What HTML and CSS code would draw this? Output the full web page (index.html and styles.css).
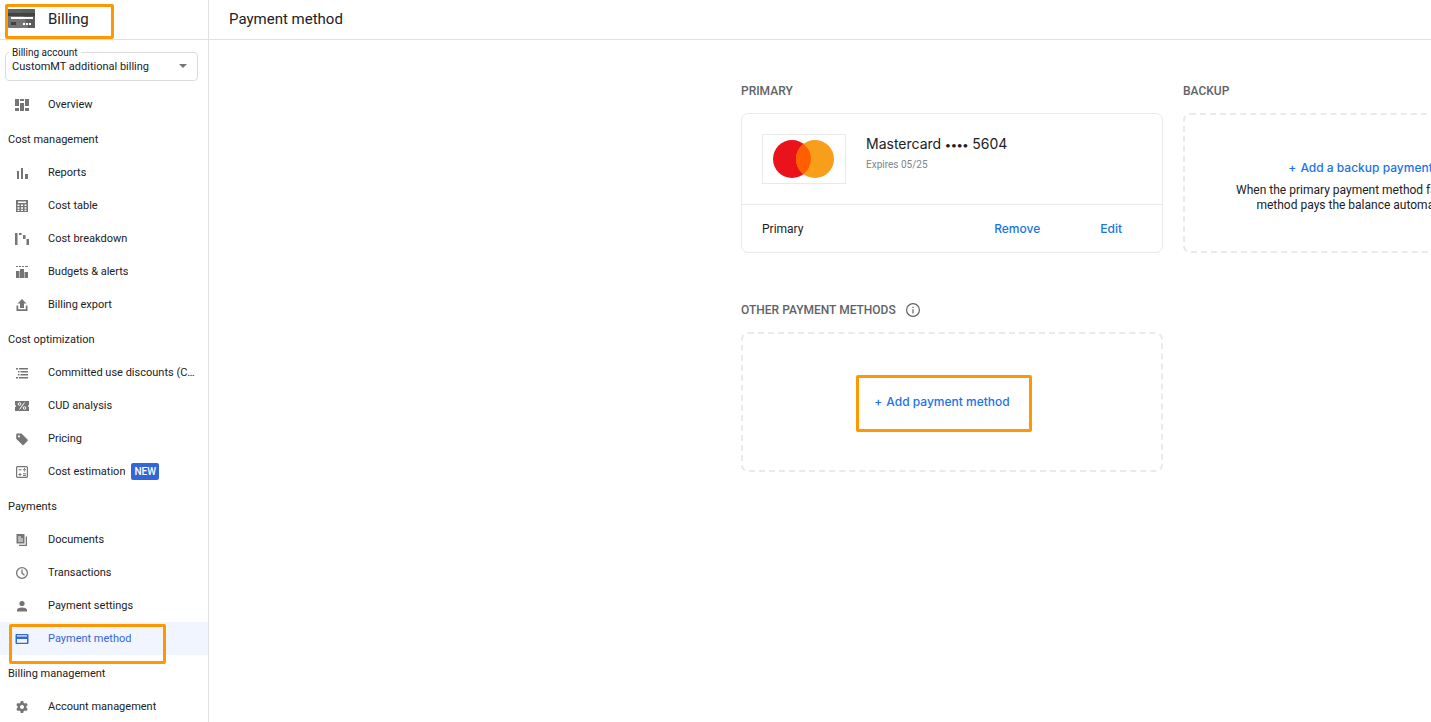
FILE: index.html
```html
<!DOCTYPE html>
<html lang="en">
<head>
    <meta charset="UTF-8">
    <meta name="viewport" content="width=device-width, initial-scale=1.0">
    <title>Payment method - Billing</title>
    <link rel="stylesheet" href="styles.css">
</head>
<body>
    <aside class="sidebar">
        <div class="product highlight highlight-product">
            <svg class="product-icon" width="28" height="20" viewBox="0 0 28 20">
                <rect x="0" y="0" width="27" height="19" rx="1" fill="#757575"/>
                <rect x="0" y="0" width="27" height="4" rx="1" fill="#616161"/>
                <path d="M14 0h12l1 1v18H20z" fill="#5c5c5c"/>
                <rect x="0" y="4" width="27" height="3" fill="#424242"/>
                <rect x="3" y="8" width="22" height="2" fill="#fff"/>
                <rect x="3" y="13" width="5" height="3" fill="#424242"/>
                <path d="M15 14h2v2h-2zM18 14h2v2h-2zM21 14h2v2h-2z" fill="#fff"/>
            </svg>
            <span class="product-name">Billing</span>
        </div>

        <div class="account">
            <label for="account">Billing account</label>
            <select id="account">
                <option>CustomMT additional billing</option>
            </select>
            <svg class="account-arrow" width="8" height="4" viewBox="0 0 8 4"><path d="M0 0h8L4 4z" fill="#757575"/></svg>
        </div>

        <nav class="nav">
            <a class="nav-item" href="#">
                <svg viewBox="0 0 16 16"><path d="M1 2h4v7H1zM1 11h4v3H1zM6 2h4v2H6zM6 6h4v8H6zM11 2h4v7h-4zM11 11h4v3h-4z"/></svg>
                <span>Overview</span>
            </a>

            <h2 class="nav-title">Cost management</h2>
            <a class="nav-item" href="#">
                <svg viewBox="0 0 16 16"><path d="M3 6h2v8H3zM7 3h2v11H7zM11 9h3v5h-3z"/></svg>
                <span>Reports</span>
            </a>
            <a class="nav-item" href="#">
                <svg viewBox="0 0 16 16"><path fill-rule="evenodd" d="M2 2h12v12H2zM4 3.500v1.500h8V3.500zM3.500 6.500v1.500h2V6.500zM7 6.500v1.500h2V6.500zM10.500 6.500v1.500h2V6.500zM3.500 9.200v1.500h2V9.200zM7 9.200v1.500h2V9.200zM10.500 9.200v1.500h2V9.200zM3.500 11.700v1.300h2v-1.300zM7 11.700v1.300h2v-1.300zM10.500 11.700v1.300h2v-1.300z"/></svg>
                <span>Cost table</span>
            </a>
            <a class="nav-item" href="#">
                <svg viewBox="0 0 16 16"><path d="M1 2h2.500v12H1zM5 2h2.500v2H5zM9 4h2.500v4H9zM12.500 8H15v6h-2.500z"/></svg>
                <span>Cost breakdown</span>
            </a>
            <a class="nav-item" href="#">
                <svg viewBox="0 0 16 16"><path d="M2 2h2v1H2zM5 2h2v1H5zM8 2h2v1H8zM11 2h3v1h-3zM2 7h3.500v7H2zM6 5h4v9H6zM10.500 8H14v6h-3.500z"/></svg>
                <span>Budgets &amp; alerts</span>
            </a>
            <a class="nav-item" href="#">
                <svg viewBox="0 0 16 16"><path d="M8 2l4.500 4.500H10v4.500H6V6.500H3.500zM2.500 8.500H4.200v3.800h7.600V8.500h1.700V14h-11z"/></svg>
                <span>Billing export</span>
            </a>

            <h2 class="nav-title">Cost optimization</h2>
            <a class="nav-item" href="#">
                <svg viewBox="0 0 16 16"><path d="M2 3h2v1.500H2zM5 3h9v1.500H5zM4 6h1.500v1.500H4zM6.500 6H14v1.500H6.500zM4 9h1.500v1.500H4zM6.500 9H14v1.500H6.500zM2 12h2v1.500H2zM5 12h9v1.500H5z"/></svg>
                <span>Committed use discounts (CUDs)</span>
            </a>
            <a class="nav-item" href="#">
                <svg viewBox="0 0 16 16"><path d="M1 3h14v4a1 1 0 0 0 0 2V13H1V9a1 1 0 0 0 0-2z"/><g fill="none" stroke="#fff"><path d="M10.500 4.500l-5 7"/><circle cx="5.500" cy="6" r="1.300"/><circle cx="10.500" cy="10" r="1.300"/></g></svg>
                <span>CUD analysis</span>
            </a>
            <a class="nav-item" href="#">
                <svg viewBox="0 0 16 16"><path fill-rule="evenodd" d="M3.200 2.500H7.500l6 6q.8.800 0 1.600l-3.700 3.700q-.8.800-1.600 0l-6-6V3.500q0-1 1-1zM5 4.200a1.100 1.100 0 1 0 .01 0z"/></svg>
                <span>Pricing</span>
            </a>
            <a class="nav-item" href="#">
                <svg viewBox="0 0 16 16"><rect x="2.600" y="2.600" width="10.800" height="10.800" rx="1" fill="none" stroke="#757575" stroke-width="1.200"/><path d="M4.500 5.200h3v1h-3zM9 5.200h3v1H9zM9 9.200h3v1H9zM9 11h3v1H9zM5.500 9h1v3h-1zM4.500 10h3v1h-3zM10 4h1v1h-1zM10 6.500h1v1h-1z"/></svg>
                <span>Cost estimation</span>
                <span class="badge">NEW</span>
            </a>

            <h2 class="nav-title">Payments</h2>
            <a class="nav-item" href="#">
                <svg viewBox="0 0 16 16"><path fill-rule="evenodd" d="M2.500 2h8v9.500h-8zM4 4.500v1h3v-1zM4 6.500v1h5v-1zM4 8.500v1h5v-1zM11.700 4.500H13V14H5v-1.300h6.700z"/></svg>
                <span>Documents</span>
            </a>
            <a class="nav-item" href="#">
                <svg viewBox="0 0 16 16"><g fill="none" stroke="#757575" stroke-width="1.300"><circle cx="8" cy="8" r="5.400"/><path d="M8 4.500V8.200l2.500 2"/></g></svg>
                <span>Transactions</span>
            </a>
            <a class="nav-item" href="#">
                <svg viewBox="0 0 16 16"><circle cx="8" cy="5.500" r="2.600"/><path d="M3 13.500v-1.500q0-2.600 5-2.600t5 2.600v1.500z"/></svg>
                <span>Payment settings</span>
            </a>
            <a class="nav-item active highlight highlight-nav" href="#" aria-current="page">
                <svg viewBox="0 0 16 16"><path fill-rule="evenodd" d="M2.500 3h11q1 0 1 1v8q0 1-1 1h-11q-1 0-1-1V4q0-1 1-1zM3 4.200v1.300h10V4.200zM3 8v3.800h10V8z"/></svg>
                <span>Payment method</span>
            </a>

            <h2 class="nav-title">Billing management</h2>
            <a class="nav-item" href="#">
                <svg viewBox="0 0 16 16"><path fill-rule="evenodd" d="M6.800 2h2.400l.4 1.700 1.200.7 1.700-.5 1.200 2.100-1.300 1.200v1.600l1.300 1.200-1.200 2.100-1.700-.5-1.200.7-.4 1.700H6.800l-.4-1.700-1.200-.7-1.700.5-1.200-2.100 1.300-1.200V7.200L2.300 6l1.200-2.100 1.700.5 1.200-.7zM8 6a2 2 0 1 0 .01 0z"/></svg>
                <span>Account management</span>
            </a>
        </nav>
    </aside>

    <main class="main">
        <header class="page-header">
            <h1>Payment method</h1>
        </header>

        <div class="methods">
            <section>
                <h2 class="methods-title">PRIMARY</h2>
                <div class="card">
                    <div class="card-info">
                        <svg class="card-logo" width="84" height="50" viewBox="0 0 84 50">
                            <rect x="0.500" y="0.500" width="83" height="49" fill="#fff" stroke="#e8eaed"/>
                            <circle cx="30" cy="25" r="19" fill="#eb131b"/>
                            <circle cx="53" cy="25" r="19" fill="#f79f1a"/>
                            <path d="M41.500 9.900a19 19 0 0 1 0 30.200a19 19 0 0 1 0-30.200z" fill="#ff5f00"/>
                        </svg>
                        <div>
                            <div class="card-name">Mastercard <span class="dots">••••</span> 5604</div>
                            <div class="card-expiry">Expires 05/25</div>
                        </div>
                    </div>
                    <div class="card-actions">
                        <span class="card-role">Primary</span>
                        <button class="link-button">Remove</button>
                        <button class="link-button">Edit</button>
                    </div>
                </div>
            </section>

            <section>
                <h2 class="methods-title">BACKUP</h2>
                <div class="card card-empty">
                    <button class="link-button add-button"><span>+</span>Add a backup payment method</button>
                    <p>When the primary payment method fails, a backup payment<br>method pays the balance automatically. Learn more</p>
                </div>
            </section>

            <section>
                <h2 class="methods-title">OTHER PAYMENT METHODS
                    <svg width="16" height="16" viewBox="0 0 16 16"><circle cx="8" cy="8" r="6.400" fill="none" stroke="#5f6368" stroke-width="1.200"/><path d="M7.400 7.200h1.200v4.200H7.400zM7.400 4.700h1.200v1.300H7.400z" fill="#5f6368"/></svg>
                </h2>
                <div class="card card-empty">
                    <button class="link-button add-button highlight highlight-add"><span>+</span>Add payment method</button>
                </div>
            </section>
        </div>
    </main>
</body>
</html>
```
FILE: styles.css
```css
*, *::after {
    box-sizing: border-box;
}
body {
    margin: 0;
    height: 100vh;
    display: flex;
    overflow: hidden;
    background: #fff;
    color: #202124;
    font-family: Roboto, sans-serif;
    font-size: 11px;
}
h1, h2, p {
    margin: 0;
    font-weight: 400;
}
button {
    padding: 0;
    border: none;
    background: none;
    cursor: pointer;
}

/* Sidebar */
.sidebar {
    flex: none;
    width: 209px;
    border-right: 1px solid #e0e0e0;
    overflow-y: auto;
    scrollbar-width: none;
}
.product {
    display: flex;
    align-items: center;
    gap: 12px;
    height: 40px;
    padding: 0 0 2px 8px;
    border-bottom: 1px solid #e0e0e0;
}
.product-name, .page-header h1 {
    font-size: 15px;
}
.account {
    position: relative;
    margin: 12px 10px 7px 5px;
}
.account label {
    position: absolute;
    top: -6px;
    left: 4px;
    padding: 0 3px;
    background: #fff;
    font-size: 10px;
    line-height: 14px;
}
.account select {
    display: block;
    width: 100%;
    height: 29px;
    padding: 0 24px 0 6px;
    border: 1px solid #dadce0;
    border-radius: 4px;
    background: none;
    color: inherit;
    font-family: inherit;
    font-size: 11px;
    appearance: none;
}
.account-arrow {
    position: absolute;
    top: 12px;
    right: 11px;
    pointer-events: none;
}
.nav-title {
    padding: 3px 0 0 8px;
    font-size: 11px;
    line-height: 32px;
}
.nav-item {
    display: flex;
    align-items: center;
    height: 33px;
    padding: 0 10px 0 14px;
    color: inherit;
    text-decoration: none;
    white-space: nowrap;
}
.nav-item svg {
    flex: none;
    width: 16px;
    height: 16px;
    margin-right: 18px;
    fill: #757575;
}
.nav-item span {
    overflow: hidden;
    text-overflow: ellipsis;
}
.nav-item.active {
    background: #f0f5ff;
    color: #3367d6;
}
.nav-item.active svg {
    fill: #3367d6;
}
.nav-item .badge {
    margin-left: 6px;
    padding: 0 3px;
    border-radius: 2px;
    background: #3367d6;
    color: #fff;
    font-size: 10px;
    font-weight: 500;
    line-height: 17px;
}

/* Orange callout frames */
.highlight {
    position: relative;
}
.highlight::after {
    content: "";
    position: absolute;
    border: 3px solid #ff9800;
    border-radius: 2px;
    pointer-events: none;
}
.highlight-product::after {
    top: 4px;
    left: 5px;
    width: 109px;
    height: 35px;
}
.highlight-nav::after {
    top: 2px;
    left: 9px;
    width: 157px;
    height: 40px;
}
.highlight-add::after {
    inset: -19px -22px -22px -18px;
}

/* Content */
.main {
    flex: 1;
    min-width: 0;
    overflow: hidden;
}
.page-header {
    display: flex;
    align-items: center;
    height: 40px;
    padding: 0 0 2px 20px;
    border-bottom: 1px solid #e0e0e0;
}
.methods {
    display: grid;
    grid-template-columns: 422px 422px;
    gap: 47px 20px;
    padding-top: 41px;
    margin-left: calc(50% - 79px);
}
.methods-title {
    display: flex;
    align-items: center;
    gap: 9px;
    height: 20px;
    margin-bottom: 12px;
    color: #5f6368;
    font-size: 12px;
    font-weight: 500;
}
.card {
    min-height: 140px;
    border: 1px solid #e8eaed;
    border-radius: 7px;
}
.card-info {
    display: flex;
    gap: 20px;
    padding: 20px;
    border-bottom: 1px solid #e8eaed;
}
.card-name {
    font-family: Inter, sans-serif;
    font-size: 14px;
    line-height: 20px;
}
.dots {
    font-family: Lato, sans-serif;
    font-size: 10px;
}
.card-expiry {
    color: #80868b;
    font-size: 10px;
    line-height: 20px;
}
.card-actions {
    display: flex;
    align-items: center;
    gap: 60px;
    height: 47px;
    padding: 0 40px 0 20px;
}
.card-role {
    flex: 1;
    font-size: 12px;
}
.link-button {
    color: #1a73e8;
    font-family: Inter, sans-serif;
    font-size: 12px;
    font-weight: 500;
    line-height: 16px;
}
.card-empty {
    display: flex;
    flex-direction: column;
    align-items: center;
    justify-content: center;
    padding-top: 6px;
    border: 2px dashed #e8eaed;
    text-align: center;
    font-size: 12px;
    line-height: 15px;
}
.add-button {
    margin-right: 20px;
    margin-bottom: 7px;
}
.add-button span {
    margin-right: 4px;
}
```
